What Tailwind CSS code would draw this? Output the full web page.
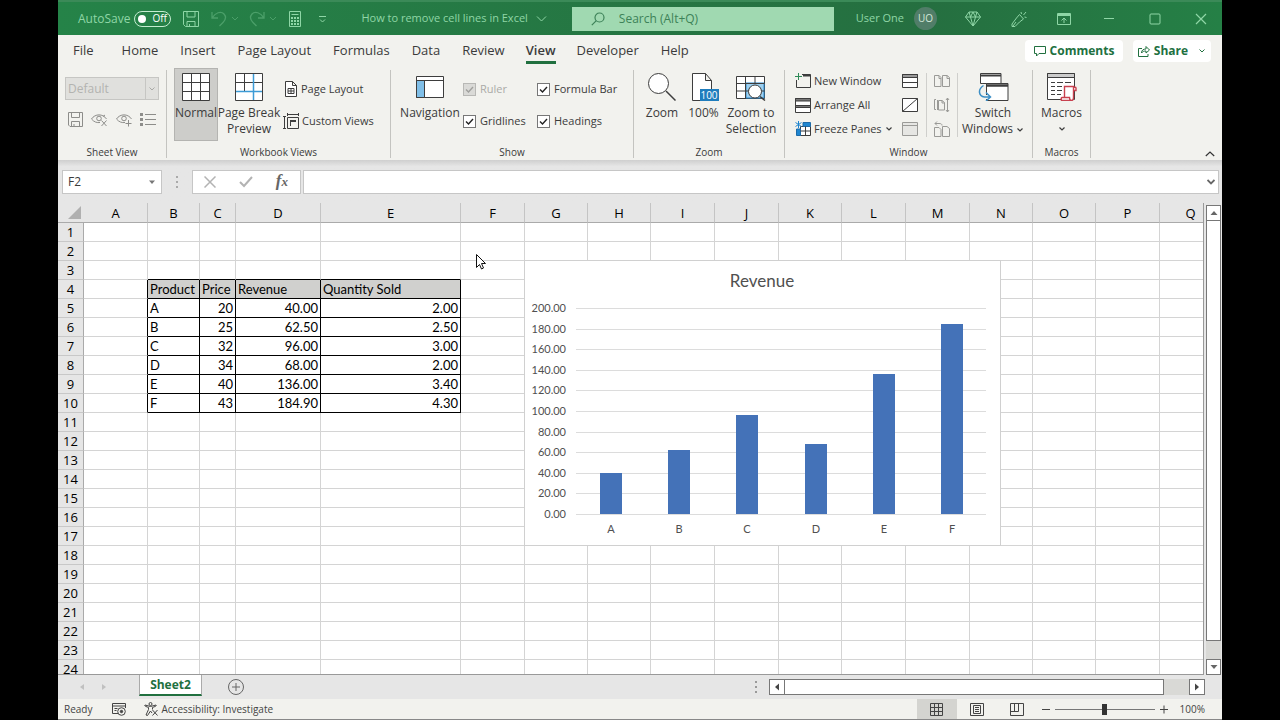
<!DOCTYPE html>
<html lang="en">
<head>
  <meta charset="UTF-8"/>
  <meta name="viewport" content="width=device-width, initial-scale=1.0"/>
  <title>How to remove cell lines in Excel</title>
  <script src="https://cdn.jsdelivr.net/npm/@tailwindcss/browser@4"></script>
</head>
<body class="bg-black font-['Open_Sans','Noto_Sans',sans-serif] text-[#3b3b3b]">
<div class="mx-[58px] h-screen flex flex-col overflow-hidden bg-[#f2f2ee]">

  <!-- title bar -->
  <header class="relative h-[35px] shrink-0 flex items-center bg-linear-to-r from-[#258348] via-[#256f40] via-75% to-[#258046] border-t-2 border-[#3b8a58] text-[#8fd6a6] text-[12px]">
    <label for="autosave" class="ml-5">AutoSave</label>
    <button id="autosave" role="switch" aria-checked="false" class="ml-1 w-[37px] h-4 rounded-full border border-[#c5edd1] flex items-center pl-[3px] text-white text-[10px]">
      <span class="w-2 h-2 rounded-full bg-white mr-1.5"></span>Off
    </button>
    <button class="ml-3" aria-label="Save"><svg class="w-4 h-4" viewBox="0 0 16 16" fill="none" stroke="currentColor"><path d="M.5.5h15v15h-13l-2-2zM4 .5v5.500h8V.5M4 15.500v-5h8v5M6.500 13v2"/></svg></button>
    <button class="ml-3 text-[#4b9f69]" aria-label="Undo"><svg class="w-4 h-4" viewBox="0 0 16 16" fill="none" stroke="currentColor" stroke-width="1.300"><path d="M1 1v6h6M1.500 6.500C4 2 10-.5 13 3s1.500 6-1 8.500L8.500 15"/></svg></button>
    <svg class="ml-1 w-2 h-2 text-[#4b9f69]" viewBox="0 0 8 8" fill="none" stroke="currentColor"><path d="M1 2l3 3 3-3"/></svg>
    <button class="ml-2.5 text-[#4b9f69]" aria-label="Redo"><svg class="w-4 h-4" viewBox="0 0 16 16" fill="none" stroke="currentColor" stroke-width="1.300"><path d="M15 1v6H9M14.500 6.500C12 2 6-.5 3 3s-1.500 6 1 8.500L7.500 15"/></svg></button>
    <svg class="ml-1 w-2 h-2 text-[#4b9f69]" viewBox="0 0 8 8" fill="none" stroke="currentColor"><path d="M1 2l3 3 3-3"/></svg>
    <button class="ml-3" aria-label="Calculator"><svg class="w-3 h-4" viewBox="0 0 12 16" fill="none" stroke="currentColor"><path d="M.5.5h11v15H.5zM2.500 3.500h7"/><path stroke-width="2" stroke-dasharray="2 1" d="M2 7h8M2 10h8M2 13h8"/></svg></button>
    <button class="ml-4" aria-label="Customize Quick Access Toolbar"><svg class="w-3 h-3" viewBox="0 0 12 12" fill="none" stroke="currentColor"><path d="M2 3.500h7M3 6.500L5.500 9 8 6.500"/></svg></button>
    <button class="ml-8 flex items-center gap-2 text-[11px] whitespace-nowrap">How to remove cell lines in Excel
      <svg class="w-[11px] h-2" viewBox="0 0 11 8" fill="none" stroke="currentColor"><path d="M1 1.500l4.500 4.500L10 1.500"/></svg>
    </button>
    <div class="ml-[25px] w-[262px] h-6 bg-[#a0d9b1] flex items-center text-[#3d8258]">
      <svg class="ml-[19px] w-3.5 h-3.5 shrink-0" viewBox="0 0 14 14" fill="none" stroke="currentColor" stroke-width="1.200"><circle cx="8.500" cy="5.500" r="4.500"/><path d="M5.300 8.700L.8 13.200"/></svg>
      <input type="search" aria-label="Search" placeholder="Search (Alt+Q)" class="ml-3.5 w-48 bg-transparent outline-none placeholder:text-[#3d8258]"/>
    </div>
    <button class="ml-auto flex items-center gap-2.5 text-[11px] whitespace-nowrap">User One
      <span class="w-[23px] h-[23px] rounded-full bg-[#517d68] text-[#d3e8da] text-[10px] flex items-center justify-center">UO</span>
    </button>
    <button class="ml-7" aria-label="Premium"><svg class="w-4 h-4" viewBox="0 0 16 16" fill="none" stroke="currentColor"><path d="M4 1h8l3.500 5L8 15 .5 6zM.5 6h15M4 1l1.500 5L8 15l2.500-9L12 1M5.500 6L8 1l2.500 5"/></svg></button>
    <button class="ml-[30px]" aria-label="Draw"><svg class="w-4 h-4" viewBox="0 0 16 16" fill="none" stroke="currentColor"><path d="M8.500 3.500l4 4.500-4 3-4.500 4.500H1v-2.500L5.500 7zM5 11l-3 4M10 1l.5 2M12.500 4L15 1M13.500 6l2 .5"/></svg></button>
    <button class="ml-[30px]" aria-label="Ribbon Display Options"><svg class="w-3.5 h-3" viewBox="0 0 14 12" fill="none" stroke="currentColor"><path d="M.5.5h13v11H.5z"/><path stroke-width="2" d="M1 2h12"/><path d="M7 10V5M4.500 7.500L7 5l2.500 2.500"/></svg></button>
    <button class="ml-8" aria-label="Minimize"><svg class="w-3 h-3" viewBox="0 0 12 12" stroke="currentColor"><path d="M1 5.500h10"/></svg></button>
    <button class="ml-[34px]" aria-label="Maximize"><svg class="w-3 h-3" viewBox="0 0 12 12" fill="none" stroke="currentColor"><rect x="1" y="1" width="10" height="10" rx="1"/></svg></button>
    <button class="ml-[34px] mr-[15px]" aria-label="Close"><svg class="w-3 h-3" viewBox="0 0 12 12" stroke="currentColor" stroke-width="1.200"><path d="M1 1l10 10M11 1L1 11"/></svg></button>
  </header>

  <!-- ribbon tabs -->
  <nav class="h-[31px] shrink-0 flex items-center pl-[15px] pr-[11px] text-[13px] whitespace-nowrap">
    <div class="flex items-center gap-[22px] h-full">
      <a href="#" class="mr-1.5">File</a>
      <a href="#">Home</a>
      <a href="#">Insert</a>
      <a href="#">Page Layout</a>
      <a href="#">Formulas</a>
      <a href="#">Data</a>
      <a href="#" class="-mr-px">Review</a>
      <a href="#" class="-mr-px font-semibold border-b-3 border-[#21703f] pt-1">View</a>
      <a href="#">Developer</a>
      <a href="#">Help</a>
    </div>
    <button class="ml-auto w-[98px] h-[22px] bg-white rounded-sm flex items-center justify-center gap-1 text-[12px] font-bold text-[#21703f]">
      <svg class="w-3 h-3" viewBox="0 0 12 12" fill="none" stroke="currentColor"><path d="M.5 1.500h11v7H5l-2.500 2.500V8.500h-2z"/></svg>Comments
    </button>
    <button class="ml-2.5 w-[78px] h-[22px] bg-white rounded-sm flex items-center justify-center gap-1 text-[12px] font-bold text-[#21703f]">
      <svg class="w-3 h-3" viewBox="0 0 12 12" fill="none" stroke="currentColor"><path d="M4 3.500H.5v8H10V9M3.500 8C3.500 5 5.500 4 8 4V1.500l3.500 3.500L8 8V6C6 6 4.500 6.500 3.500 8z"/></svg>Share
      <svg class="ml-1.5 w-2 h-2" viewBox="0 0 8 8" fill="none" stroke="currentColor"><path d="M1.500 2.500L4 5l2.500-2.500"/></svg>
    </button>
  </nav>

  <!-- ribbon -->
  <div class="relative h-[94px] shrink-0 flex pt-0.5 text-[12px] leading-4 whitespace-nowrap">
    <section class="w-[109px] border-r border-[#c4c4c0] my-0.5 flex flex-col">
      <div class="h-[75px] shrink-0 px-[7px] pt-[7px]">
        <div class="relative w-[94px]">
          <select disabled aria-label="Sheet view" class="w-full h-[23px] appearance-none border border-[#c6c6c3] bg-[#e0e0dd] pl-0.5 text-[#b3b3b0] opacity-100"><option>Default</option></select>
          <svg class="absolute right-0 top-0 w-[14px] h-[23px] pointer-events-none" viewBox="0 0 14 23" fill="none" stroke="#a9a9a6"><path stroke="#c6c6c3" d="M.5 0v23"/><path d="M4.500 10.500L7 13l2.500-2.500"/></svg>
        </div>
        <div class="flex items-center justify-between mt-3 px-[3px] text-[#8d8d8a]">
          <button aria-label="Keep"><svg class="w-[15px] h-[15px]" viewBox="0 0 15 15" fill="none" stroke="currentColor"><path d="M.5.5h14v14H2l-1.500-1.500zM3.500.5v5h8v-5M3.500 14.500v-5h8v5M6 12v2"/></svg></button>
          <button aria-label="Exit"><svg class="w-4 h-[15px]" viewBox="0 0 16 15" fill="none" stroke="currentColor"><path d="M.5 7C4 1.500 12 1.500 15.500 7M.5 7C3 10 6 11 9 10.500M12 4.500L14 3"/><circle cx="8" cy="6.500" r="2.300"/><path d="M10.500 8.500l5 5.500M15.500 8.500l-5 5.500"/></svg></button>
          <button aria-label="New"><svg class="w-4 h-[15px]" viewBox="0 0 16 15" fill="none" stroke="currentColor"><path d="M.5 7C4 1.500 12 1.500 15.500 7M.5 7C3 10 6 11 9 10.500"/><circle cx="8" cy="6.500" r="2.300"/><path d="M12.500 8v6.500M9.500 11.500h6"/></svg></button>
          <button aria-label="Options"><svg class="w-4 h-[15px]" viewBox="0 0 16 15" fill="none" stroke="currentColor"><path d="M5 2.500h11M5 7.500h11M5 12.500h11"/><path stroke-width="3" d="M0 2.500h3M0 7.500h3M0 12.500h3"/></svg></button>
        </div>
      </div>
      <h2 class="text-center text-[10px] leading-[14px]">Sheet View</h2>
    </section>

    <section class="w-[224px] border-r border-[#c4c4c0] my-0.5 flex flex-col">
      <div class="h-[75px] shrink-0 flex pl-[7px]">
        <button class="-mt-0.5 w-[44px] h-[73px] border border-[#b4b4b1] bg-[#cdcdca] flex flex-col items-center pt-1 gap-1">
          <svg class="w-7 h-7 shrink-0" viewBox="0 0 28 28" fill="#fff" stroke="#3d3d3d"><path d="M.5.5h27v27H.5zM9.500.5v27M18.500.5v27M.5 9.500h27M.5 18.500h27"/></svg>Normal
        </button>
        <button class="-mt-0.5 w-[62px] flex flex-col items-center pt-[5px] gap-1">
          <svg class="w-7 h-7 shrink-0" viewBox="0 0 28 28" fill="#fff" stroke="#3d3d3d"><path d="M.5.5h27v27H.5zM9.500.5v18M.5 9.500h18M18.500 9.500h9"/><path fill="none" stroke="#3c9bd6" stroke-width="1.500" d="M18.500 1v26M1 18.500h26"/></svg><span>Page Break<br/>Preview</span>
        </button>
        <div class="ml-[3px] pt-2.5 flex flex-col gap-3.5 text-[11px]">
          <button class="flex items-center gap-1 h-[18px] pl-0.5"><svg class="w-3 h-4" viewBox="0 0 12 16" fill="#fff" stroke="#3d3d3d"><path d="M.5.5h7l4 4v11H.5zM7.500.5v4h4M3 7.500h6v5H3zM6 7.500v5M3 10h6"/></svg>Page Layout</button>
          <button class="flex items-center gap-[3px] h-[18px]"><svg class="w-4 h-4" viewBox="0 0 16 16" fill="none" stroke="#3d3d3d"><path d="M0 3.500h3M1.500 3.500v12M0 15.500h3M4.500 1.500h11M4.500 0v3M15.500 0v3M4.500 4.500h11v11h-11z"/><path stroke-width="2" d="M7 8h6"/><path d="M7.500 8v5"/></svg>Custom Views</button>
        </div>
      </div>
      <h2 class="text-center text-[10px] leading-[14px]">Workbook Views</h2>
    </section>

    <section class="w-[243px] border-r border-[#c4c4c0] my-0.5 flex flex-col">
      <div class="h-[75px] shrink-0 flex pl-[9px]">
        <button class="-mt-0.5 w-[60px] flex flex-col items-center pt-[5px] gap-1">
          <svg class="w-7 h-7 shrink-0" viewBox="0 0 28 28" fill="#fff" stroke="#3d3d3d"><path d="M.5 3.500h27v21H.5z"/><path fill="#80bfe8" d="M.5 7.500h8v17h-8z"/><path d="M.5 7.500h27"/></svg>Navigation
        </button>
        <div class="ml-[3px] pt-[11px] grid grid-cols-[74px_auto] auto-rows-[16px] gap-y-4 content-start text-[11px]">
          <label class="flex items-center gap-1 text-[#aaaaa7]"><span class="grid"><input type="checkbox" checked disabled class="appearance-none w-[13px] h-[13px] border border-[#b8b8b5] bg-[#dadad7] col-start-1 row-start-1"/><svg class="w-[13px] h-[13px] col-start-1 row-start-1 pointer-events-none" viewBox="0 0 13 13" fill="none" stroke="#a0a09d" stroke-width="1.400"><path d="M3 6.500l2.500 2.500 4.500-5"/></svg></span>Ruler</label>
          <label class="flex items-center gap-1"><span class="grid"><input type="checkbox" checked class="appearance-none w-[13px] h-[13px] border border-[#777] bg-white col-start-1 row-start-1"/><svg class="w-[13px] h-[13px] col-start-1 row-start-1 pointer-events-none" viewBox="0 0 13 13" fill="none" stroke="#222" stroke-width="1.400"><path d="M3 6.500l2.500 2.500 4.500-5"/></svg></span>Formula Bar</label>
          <label class="flex items-center gap-1"><span class="grid"><input type="checkbox" checked class="appearance-none w-[13px] h-[13px] border border-[#777] bg-white col-start-1 row-start-1"/><svg class="w-[13px] h-[13px] col-start-1 row-start-1 pointer-events-none" viewBox="0 0 13 13" fill="none" stroke="#222" stroke-width="1.400"><path d="M3 6.500l2.500 2.500 4.500-5"/></svg></span>Gridlines</label>
          <label class="flex items-center gap-1"><span class="grid"><input type="checkbox" checked class="appearance-none w-[13px] h-[13px] border border-[#777] bg-white col-start-1 row-start-1"/><svg class="w-[13px] h-[13px] col-start-1 row-start-1 pointer-events-none" viewBox="0 0 13 13" fill="none" stroke="#222" stroke-width="1.400"><path d="M3 6.500l2.500 2.500 4.500-5"/></svg></span>Headings</label>
        </div>
      </div>
      <h2 class="text-center text-[10px] leading-[14px]">Show</h2>
    </section>

    <section class="w-[151px] border-r border-[#c4c4c0] my-0.5 flex flex-col">
      <div class="h-[75px] shrink-0 flex pl-2">
        <button class="-mt-0.5 w-[40px] flex flex-col items-center pt-[5px] gap-1">
          <svg class="w-7 h-7 shrink-0" viewBox="0 0 28 28" fill="#fff" stroke="#3d3d3d"><circle cx="10.500" cy="10.500" r="10"/><path stroke-width="1.500" d="M18 18l9.500 9.500"/></svg>Zoom
        </button>
        <button class="-mt-0.5 w-[43px] flex flex-col items-center pt-[5px] gap-1">
          <svg class="w-[30px] h-[28px] shrink-0" viewBox="0 0 30 28" fill="#fff" stroke="#3d3d3d"><path d="M3.500.5h13l6 7v20h-19zM16.500.5v7h6"/><rect x="11" y="16" width="19" height="12" fill="#1f7dbd" stroke="none"/><text x="20" y="26" font-size="10" text-anchor="middle" stroke="none">100</text></svg>100%
        </button>
        <button class="-mt-0.5 w-[52px] flex flex-col items-center pt-[5px] gap-1">
          <svg class="w-[30px] h-7 shrink-0" viewBox="0 0 30 28" fill="#fff" stroke="#3d3d3d"><path d="M.5 3.500h28v22H.5z"/><path fill="#9dd0f0" stroke="#2a8ad0" d="M10 10h18v15H10z"/><path fill="none" d="M.5 10.500h28M.5 18h28M9.500 3.500v22M19 3.500V11"/><circle cx="19" cy="18.500" r="6.500"/><path stroke-width="1.500" d="M24 23.500l5 4"/></svg><span>Zoom to<br/>Selection</span>
        </button>
      </div>
      <h2 class="text-center text-[10px] leading-[14px]">Zoom</h2>
    </section>

    <section class="w-[248px] border-r border-[#c4c4c0] my-0.5 flex flex-col">
      <div class="h-[75px] shrink-0 flex pl-2.5">
        <div class="w-[107px] flex flex-col gap-2 pt-[3px] text-[11px]">
          <button class="flex items-center gap-[3px]"><svg class="w-4 h-4 shrink-0" viewBox="0 0 16 16" fill="none" stroke="#3d3d3d"><path d="M7 1.500h8.500v13H1.500V7"/><path stroke-width="2" d="M8 2.500h7.500"/><path stroke="#2e8b57" d="M0 3.500h7M3.500 0v7"/></svg>New Window</button>
          <button class="flex items-center gap-[3px]"><svg class="w-4 h-4 shrink-0" viewBox="0 0 16 16" fill="#fff" stroke="#3d3d3d"><path d="M.5 1.500h15v14H.5z"/><path d="M.5 1.500h15V4H.5zM.5 8.500h15v2H.5z" fill="#777"/></svg>Arrange All</button>
          <button class="flex items-center gap-[3px]"><svg class="w-4 h-4 shrink-0" viewBox="0 0 16 16" fill="#fff" stroke="#3d3d3d"><path d="M5.500 5.500h10v9h-10z"/><path d="M8 1.500h7.500v4H8zM1.500 8h4v6.500h-4z" fill="#1f86d0" stroke="#1d6aa8"/><path d="M5.500 10h10M10.500 5.500v9"/><path stroke="#1f86d0" d="M3.500 0v7M.5 1.500l6 4M6.500 1.500l-6 4"/></svg>Freeze Panes<svg class="w-2 h-2" viewBox="0 0 8 8" fill="none" stroke="#3d3d3d" stroke-width="1.200"><path d="M1.500 2.500L4 5l2.500-2.500"/></svg></button>
        </div>
        <div class="w-[25px] h-16 mt-[3px] border-r border-[#cfcfcc] flex flex-col justify-between">
          <button aria-label="Split"><svg class="w-4 h-4" viewBox="0 0 16 16" fill="#fff" stroke="#3d3d3d"><path d="M.5 1.500h15v13H.5z"/><path fill="#999" d="M.5 1.500h15v3H.5z"/><path d="M.5 9.500h15"/></svg></button>
          <button aria-label="Hide"><svg class="w-4 h-4" viewBox="0 0 16 16" fill="#fff" stroke="#3d3d3d"><path d="M.5 1.500h15v13H.5zM.5 14.500l15-13"/></svg></button>
          <button aria-label="Unhide"><svg class="w-4 h-4" viewBox="0 0 16 16" fill="#e6e6e3" stroke="#9a9a97"><path d="M.5 1.500h15v13H.5zM.5 4.500h15"/></svg></button>
        </div>
        <div class="w-[31px] h-16 mt-[3px] border-r border-[#cfcfcc] flex flex-col justify-between items-center">
          <button aria-label="View Side by Side"><svg class="w-4 h-4" viewBox="0 0 16 16" fill="none" stroke="#9a9a97"><path d="M.5 2.500H5l2 2v9H.5zM8.500 2.500H13l2.500 2v9h-7zM5 2.500v3h2M13 2.500v3h2.500"/></svg></button>
          <button aria-label="Synchronous Scrolling"><svg class="w-4 h-4" viewBox="0 0 16 16" fill="none" stroke="#9a9a97"><path d="M2 2.500H.5v10H2M3.500 3v10M4.500 3.500H8l2.500 2V13h-6zM8 3.500v2.500h2.500M13.500 1v14M12 3l1.500-2L15 3M12 13l1.500 2L15 13"/></svg></button>
          <button aria-label="Reset Window Position"><svg class="w-4 h-4" viewBox="0 0 16 16" fill="none" stroke="#9a9a97"><path d="M.5 6.500H5l2 2v7H.5zM8.500 5.500H13l2.500 2v8h-7zM1 2.500h4c2 0 3 .5 3 2M3 .5l-2 2 2 2"/></svg></button>
        </div>
        <button class="-mt-0.5 w-[70px] flex flex-col items-center pt-[5px] gap-1">
          <svg class="w-[31px] h-7 shrink-0" viewBox="0 0 31 28" fill="#fff" stroke="#3d3d3d"><path d="M2.500.5H23v10H2.500z"/><path stroke-width="2" d="M2.500 2.500H23"/><path d="M8.500 10.500h21.500v17H8.500z"/><path stroke-width="2.500" d="M8.500 12.500H30"/><path fill="none" stroke="#f2f2ee" stroke-width="4" d="M5.500 12.500c-6 4-5 10.500 1 11.500h5"/><path fill="none" stroke="#3c8fc6" stroke-width="1.500" d="M5.500 12.500c-6 4-5 10.500 1 11.500h6M8 19.500l4.500 4.500L8 28"/></svg>
          <span>Switch<br/>Windows <svg class="inline w-2 h-2" viewBox="0 0 8 8" fill="none" stroke="#3d3d3d" stroke-width="1.200"><path d="M1.500 2.500L4 5l2.500-2.500"/></svg></span>
        </button>
      </div>
      <h2 class="text-center text-[10px] leading-[14px]">Window</h2>
    </section>

    <section class="w-[58px] border-r border-[#c4c4c0] my-0.5 flex flex-col">
      <div class="h-[75px] shrink-0 flex justify-center">
        <button class="-mt-0.5 w-[50px] flex flex-col items-center pt-[5px] gap-1">
          <svg class="w-[30px] h-7 shrink-0" viewBox="0 0 30 28" fill="#fff" stroke="#3d3d3d"><path d="M.5.5h27v26H.5z"/><path fill="#ccc" d="M.5.5h27v4H.5z"/><path d="M4 9.500h4M10 9.500h6M18 9.500h6M4 13.500h4M10 13.500h5M4 17.500h4M10 17.500h5M4 21.500h4M10 21.500h4"/><path stroke="#c8414f" stroke-width="1.400" d="M17.500 13.500h9v11c0 2-1 3-2 3h-9.500c-1.500 0-1-3 0-3h2.500zM26.500 17.500h2.500v-2.500c0-1-2.500-1-2.500 0M17.500 24.500h5c0 2 .5 3 2 3"/></svg>Macros
          <svg class="w-2 h-2" viewBox="0 0 8 8" fill="none" stroke="#3d3d3d" stroke-width="1.200"><path d="M1.500 2.500L4 5l2.500-2.500"/></svg>
        </button>
      </div>
      <h2 class="text-center text-[10px] leading-[14px]">Macros</h2>
    </section>
    <button class="ml-auto self-end mr-[7px] mb-0.5" aria-label="Collapse the Ribbon"><svg class="w-2.5 h-2" viewBox="0 0 10 8" fill="none" stroke="#333" stroke-width="1.200"><path d="M.8 6L5 2l4.200 4"/></svg></button>
  </div>

  <!-- formula bar -->
  <div class="h-[43px] shrink-0 flex items-center bg-linear-to-b from-[#cfcfcf] to-[#e6e6e6] to-15% pl-1 pr-[3px] text-[12px]">
    <div class="relative w-[100px]">
      <input aria-label="Name Box" value="F2" class="w-full h-6 border border-[#c6c6c6] bg-white pl-[5px] outline-none"/>
      <svg class="absolute right-1.5 top-2 w-2 h-2" viewBox="0 0 8 8" fill="#777"><path d="M1 2.500h6L4 6z"/></svg>
    </div>
    <svg class="ml-3.5 w-[3px] h-3" viewBox="0 0 3 12" fill="#aaa"><path d="M0 0h2v2H0zM0 5h2v2H0zM0 10h2v2H0z"/></svg>
    <div class="ml-[13px] w-[109px] h-6 border border-[#c6c6c6] bg-white flex items-center justify-between pl-[11px] pr-3">
      <button aria-label="Cancel"><svg class="w-3 h-3" viewBox="0 0 12 12" stroke="#b3b3b3" stroke-width="1.500"><path d="M.5.5l11 11M11.500.5l-11 11"/></svg></button>
      <button aria-label="Enter"><svg class="w-3.5 h-3" viewBox="0 0 14 12" fill="none" stroke="#b3b3b3" stroke-width="2"><path d="M1 6l4 4 8-9"/></svg></button>
      <button class="font-['Liberation_Serif',serif] italic font-bold text-[17px] leading-4 text-[#666]">f<span class="text-[13px]">x</span></button>
    </div>
    <div class="relative ml-0.5 grow">
      <input aria-label="Formula" class="w-full h-6 border border-[#c6c6c6] bg-white px-2 outline-none"/>
      <svg class="absolute right-1 top-2 w-2 h-2" viewBox="0 0 8 8" fill="none" stroke="#666" stroke-width="1.800"><path d="M.5 2L4 5.500 7.500 2"/></svg>
    </div>
  </div>

  <!-- sheet -->
  <main class="grow min-h-0 flex bg-[#e6e6e6]">
    <div class="relative grow overflow-hidden border-r border-b border-[#999]">
      <table class="table-fixed w-[1164px] border-separate border-spacing-0 text-[13px] leading-[18px] text-black font-['Lato','Open_Sans',sans-serif]">
        <colgroup id="cols"></colgroup>
        <thead><tr id="heads" class="h-5"></tr></thead>
        <tbody id="rows"></tbody>
      </table>

      <!-- revenue chart, floats over the cells -->
      <figure class="absolute left-[466px] top-[57px] w-[477px] h-[286px] bg-white border border-[#d0d0d0]">
        <svg id="chart" class="w-full h-full font-['Lato','Open_Sans',sans-serif]" viewBox="0 0 475 284" fill="#505050" font-size="11" role="img" aria-label="Revenue"></svg>
      </figure>

      <svg class="absolute left-[417px] top-[50px] w-3 h-[18px]" viewBox="0 0 12 18" fill="#fff" stroke="#111"><path d="M1.500 1.500v13l3-3 2 4.500 2-1-2-4.500h4z"/></svg>
    </div>
    <div class="w-[18px] shrink-0 flex flex-col px-px pt-0.5 pl-0.5">
      <button class="h-4 border border-[#777] bg-white flex items-center justify-center" aria-label="Scroll up"><svg class="w-2 h-2" viewBox="0 0 8 8" fill="#666"><path d="M.5 6h7L4 2z"/></svg></button>
      <div class="grow bg-[#d9d9d6]"><div class="h-[96%] border border-[#777] border-t-0 bg-white"></div></div>
      <button class="h-4 border border-[#777] bg-white flex items-center justify-center" aria-label="Scroll down"><svg class="w-2 h-2" viewBox="0 0 8 8" fill="#666"><path d="M.5 2h7L4 6z"/></svg></button>
    </div>
  </main>

  <!-- sheet tabs -->
  <div class="h-6 shrink-0 flex bg-[#e6e6e6]">
    <div class="w-20 flex items-center pl-5 gap-3.5">
      <svg class="w-2 h-2" viewBox="0 0 8 8" fill="#c0c0c0"><path d="M6 1v6L2 4z"/></svg>
      <svg class="w-2 h-2" viewBox="0 0 8 8" fill="#c0c0c0"><path d="M2 1v6l4-3z"/></svg>
    </div>
    <button class="ml-px h-[21px] w-[63px] bg-white border-x border-[#aaa] border-b-2 border-b-[#21703f] text-[12px] leading-[18px] font-bold text-[#21703f]">Sheet2</button>
    <button class="ml-[26px] h-6" aria-label="New sheet"><svg class="w-4 h-4" viewBox="0 0 16 16" fill="none" stroke="#666"><circle cx="8" cy="8" r="7.500"/><path d="M8 4v8M4 8h8"/></svg></button>
    <svg class="ml-auto mt-1.5 w-[3px] h-3" viewBox="0 0 3 12" fill="#999"><path d="M0 0h2v2H0zM0 5h2v2H0zM0 10h2v2H0z"/></svg>
    <div class="ml-[11px] mr-[17px] mt-1 w-[436px] h-4 flex bg-[#d9d9d6]">
      <button class="w-4 border border-[#777] bg-white flex items-center justify-center" aria-label="Scroll left"><svg class="w-2 h-2" viewBox="0 0 8 8" fill="#444"><path d="M6 .5v7L2 4z"/></svg></button>
      <div class="w-[379px] border border-[#777] border-l-0 bg-white"></div>
      <button class="ml-auto w-4 border border-[#777] bg-white flex items-center justify-center" aria-label="Scroll right"><svg class="w-2 h-2" viewBox="0 0 8 8" fill="#444"><path d="M2 .5v7L6 4z"/></svg></button>
    </div>
  </div>

  <!-- status bar -->
  <footer class="h-[21px] shrink-0 flex items-center border-b border-[#888] pl-1.5 pr-[17px] text-[10px] text-[#444]">
    <span>Ready</span>
    <svg class="ml-5 w-3.5 h-3.5" viewBox="0 0 14 14" fill="none" stroke="#444"><path d="M6 11.500H.5V1.500h13V6M.5 4h13M2.500 6.500h3M2.500 8.500h2"/><circle cx="9.500" cy="9.500" r="3.800"/><circle cx="9.500" cy="9.500" r="1.200" fill="#444"/></svg>
    <button class="ml-[18px] flex items-center gap-0.5"><svg class="w-[15px] h-3.5" viewBox="0 0 15 14" fill="none" stroke="#444"><circle cx="6.500" cy="2" r="1.500"/><path d="M1 3c-1 1 1 1.500 3.500 2.500v2L2 13l1.500.5 3-4.500 1.500 2M12 3c1 1-1 1.500-3.500 2.500v2M1 3l5.500 1.500L12 3M8.500 8l5 5.500M13.500 8l-5 5.500"/></svg>Accessibility: Investigate</button>
    <button class="ml-auto w-10 h-5 bg-[#d4d4d0] flex items-center justify-center" aria-label="Normal view"><svg class="w-[13px] h-[13px]" viewBox="0 0 13 13" fill="none" stroke="#444"><path d="M.5.5h12v12H.5zM4.500.5v12M8.500.5v12M.5 4.500h12M.5 8.500h12"/></svg></button>
    <button class="w-10 h-5 flex items-center justify-center" aria-label="Page layout view"><svg class="w-3.5 h-[13px]" viewBox="0 0 14 13" fill="none" stroke="#444"><path d="M.5.500h13v12H.5zM3.500 2.500h7v8h-7zM5 4.500h4M5 6.500h4M5 8.500h4"/></svg></button>
    <button class="w-10 h-5 flex items-center justify-center" aria-label="Page break view"><svg class="w-3.5 h-[13px]" viewBox="0 0 14 13" fill="none" stroke="#444"><path d="M.5.500h13v12H.5zM.5 8.500h8v-8M4.500.5v8"/></svg></button>
    <button class="ml-1 w-2.5" aria-label="Zoom out"><svg class="w-2.5 h-2.5" viewBox="0 0 10 10" stroke="#444"><path d="M1 5.500h8"/></svg></button>
    <input type="range" min="0" max="100" value="50" aria-label="Zoom" class="mx-1 w-[100px] h-3 appearance-none bg-transparent bg-linear-to-b from-[#777] to-[#777] bg-size-[100%_1px] bg-center bg-no-repeat [&::-webkit-slider-thumb]:appearance-none [&::-webkit-slider-thumb]:w-[5px] [&::-webkit-slider-thumb]:h-[11px] [&::-webkit-slider-thumb]:bg-[#333]"/>
    <button class="w-2.5" aria-label="Zoom in"><svg class="w-2.5 h-2.5" viewBox="0 0 10 10" stroke="#444"><path d="M1 5.500h8M5 1.500v8"/></svg></button>
    <span class="ml-[11px]">100%</span>
  </footer>
</div>

<script>
  const widths = [26, 64, 52, 36, 85, 140, 64, 63, 63, 64, 64, 63, 64, 64, 63, 63, 64, 62];
  const letters = " ABCDEFGHIJKLMNOPQ";
  const data = [
    ["Product", "Price", "Revenue", "Quantity Sold"],
    ["A", "20", "40.00", "2.00"],
    ["B", "25", "62.50", "2.50"],
    ["C", "32", "96.00", "3.00"],
    ["D", "34", "68.00", "2.00"],
    ["E", "40", "136.00", "3.40"],
    ["F", "43", "184.90", "4.30"],
  ];

  document.getElementById("cols").innerHTML = widths.map(w => `<col style="width:${w}px">`).join("");

  document.getElementById("heads").innerHTML = widths.map((w, i) => i === 0
    ? `<th class="p-0 border-b border-[#aaa]"><svg class="ml-2.5 w-[13px] h-[13px]" viewBox="0 0 13 13" fill="#b0b0b0"><path d="M13 0v13H0z"/></svg></th>`
    : `<th class="p-0 h-5 bg-[#e6e6e6] border-r border-r-[#c4c4c4] border-b border-b-[#aaa] font-normal font-['Open_Sans',sans-serif]">${letters[i]}</th>`
  ).join("");

  // B4:E10 is the bordered range
  let html = "";
  for (let r = 1; r <= 24; r++) {
    html += `<tr><th class="p-0 h-[19px] bg-[#e6e6e6] border-r border-r-[#aaa] border-b border-b-[#c8c8c8] font-normal font-['Open_Sans',sans-serif]">${r}</th>`;
    for (let c = 1; c <= 17; c++) {
      const row = data[r - 4];
      const text = row && c >= 2 && c <= 5 ? row[c - 2] : "";
      const right = row && c <= 5 ? "border-r-black" : "border-r-[#d4d4d4]";
      const bottom = r >= 3 && r <= 10 && c >= 2 && c <= 5 ? "border-b-black" : "border-b-[#d4d4d4]";
      const fill = r === 4 && text ? "bg-[#d0d0ce]" : "bg-white";
      const align = r > 4 && c > 2 ? "text-right" : "text-left";
      html += `<td class="px-0.5 py-0 h-[19px] border-r border-b whitespace-nowrap ${right} ${bottom} ${fill} ${align}">${text}</td>`;
    }
    html += "</tr>";
  }
  document.getElementById("rows").innerHTML = html;

  // chart
  const base = 253, top0 = 47;
  let svg = `<text x="237" y="26" font-size="17" text-anchor="middle">Revenue</text>`;
  for (let v = 0; v <= 200; v += 20) {
    const y = Math.round(base - (base - top0) * v / 200);
    svg += `<path d="M51 ${y}.5H461" stroke="#dcdcdc"/><text x="41" y="${y + 4}" text-anchor="end">${v.toFixed(2)}</text>`;
  }
  data.slice(1).forEach((d, i) => {
    const x = 75 + Math.round(i * 68.2);
    const h = Math.round((base - top0) * d[2] / 200);
    svg += `<rect x="${x}" y="${base - h}" width="22" height="${h}" fill="#4472b8"/><text x="${x + 11}" y="272" text-anchor="middle">${d[0]}</text>`;
  });
  document.getElementById("chart").innerHTML = svg;
</script>
</body>
</html>
